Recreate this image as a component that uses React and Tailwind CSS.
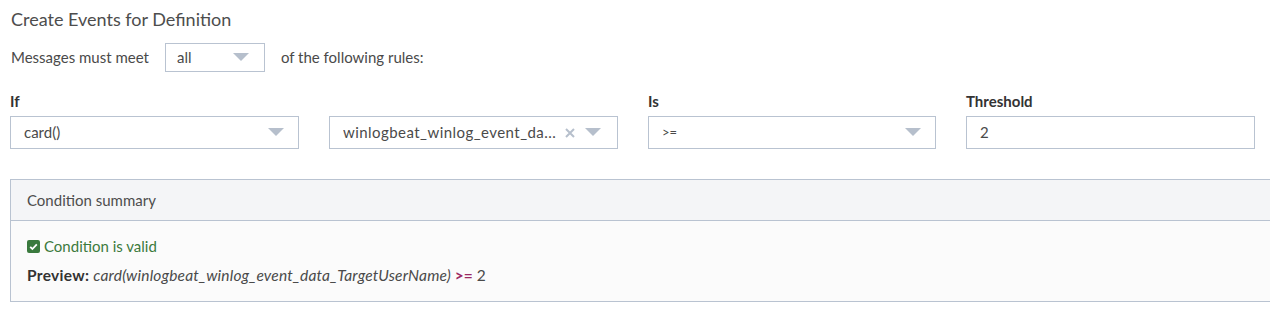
import React from "react";

const Caret = () => (
  <svg width="16" height="9" viewBox="0 0 16 9" className="shrink-0">
    <path d="M0 0 H16 L8 8 Z" fill="#b6bfcc" />
  </svg>
);

const Box = ({ children, className = "" }) => (
  <div className={"flex items-center h-[33px] border border-[#b9c3d1] bg-white pl-[13px] pr-[14px] text-[15px] text-[#4a4a4a] " + className}>
    {children}
  </div>
);

export default function App() {
  return (
    <div className="w-[1270px] h-[313px] bg-white overflow-hidden text-[#4a4a4a]" style={{ fontFamily: "Lato, 'Noto Sans', sans-serif" }}>
      <div className="pl-[11px] pt-[8px]">
        <div className="text-[18px] leading-[22px] text-[#4d4d4d]">Create Events for Definition</div>
        <div className="flex items-center mt-[13px] text-[15px]">
          <span>Messages must meet</span>
          <div className="ml-[16px] flex items-center justify-between w-[100px] h-[29px] border border-[#b9c3d1] pl-[11px] pr-[15px]">
            <span className="text-[#4a4a4a]">all</span>
            <Caret />
          </div>
          <span className="ml-[16px]">of the following rules:</span>
        </div>
      </div>

      <div className="flex gap-[30px] pl-[10px] mt-[20px]">
        <div className="w-[289px]">
          <div className="text-[15px] font-bold text-[#333] leading-[18px] mb-[6px]">If</div>
          <Box className="justify-between">
            <span>card()</span>
            <Caret />
          </Box>
        </div>
        <div className="w-[289px]">
          <div className="h-[18px] mb-[6px]"></div>
          <Box className="justify-between pr-[16px]">
            <span className="truncate tracking-[0.45px]">winlogbeat_winlog_event_da...</span>
            <div className="flex items-center gap-[10px]">
              <svg width="10" height="10" viewBox="0 0 10 10">
                <path d="M1 1 L9 9 M9 1 L1 9" stroke="#b6bfcc" strokeWidth="2" />
              </svg>
              <Caret />
            </div>
          </Box>
        </div>
        <div className="w-[288px]">
          <div className="text-[15px] font-bold text-[#333] leading-[18px] mb-[6px]">Is</div>
          <Box className="justify-between">
            <span className="text-[13px]">&gt;=</span>
            <Caret />
          </Box>
        </div>
        <div className="w-[289px]">
          <div className="text-[15px] font-bold text-[#333] leading-[18px] mb-[6px]">Threshold</div>
          <Box>
            <span>2</span>
          </Box>
        </div>
      </div>

      <div className="ml-[10px] mt-[30px] w-[1280px] border border-[#b9c3d1] bg-[#fbfbfb]">
        <div className="h-[41px] flex items-center pl-[16px] bg-[#f4f5f7] border-b border-[#b9c3d1] text-[15px] text-[#4d4d4d]">
          Condition summary
        </div>
        <div className="pl-[16px] pt-[15px] pb-[16px] text-[15px]">
          <div className="flex items-center gap-[4px] text-[#3c7a3c] leading-[20px]">
            <svg width="13" height="13" viewBox="0 0 13 13">
              <rect width="13" height="13" rx="2" fill="#3a7a3e" />
              <path d="M3.2 6.8 L5.4 9 L9.8 4.4" stroke="white" strokeWidth="1.8" fill="none" />
            </svg>
            <span>Condition is valid</span>
          </div>
          <div className="mt-[9px] text-[15.5px] leading-[20px] text-[#4a4a4a]">
            <span className="font-bold text-[#333] tracking-[0.3px]">Preview: </span>
            <span className="italic tracking-[0.2px]">card(winlogbeat_winlog_event_data_TargetUserName)</span>
            <span className="font-bold text-[#9b2a63]"> &gt;=</span>
            <span> 2</span>
          </div>
        </div>
      </div>
    </div>
  );
}
